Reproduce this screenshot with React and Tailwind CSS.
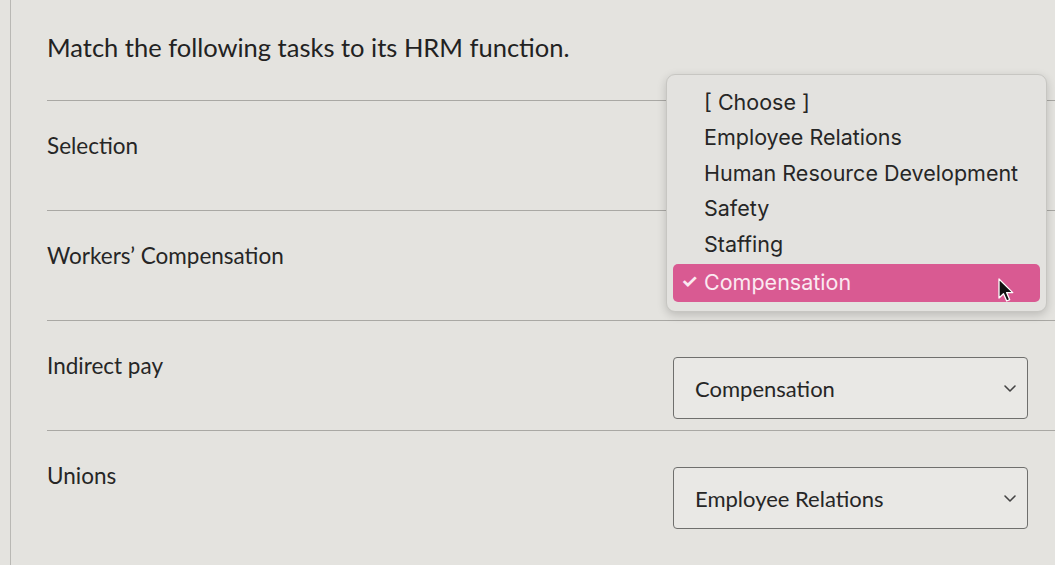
import React from 'react';

const rows = [
  { label: 'Selection', value: '[ Choose ]', covered: true },
  { label: 'Workers’ Compensation', value: 'Compensation', covered: true },
  { label: 'Indirect pay', value: 'Compensation' },
  { label: 'Unions', value: 'Employee Relations' },
];

const options = [
  '[ Choose ]',
  'Employee Relations',
  'Human Resource Development',
  'Safety',
  'Staffing',
  'Compensation',
];

function Chevron() {
  return (
    <svg width="14" height="9" viewBox="0 0 14 9" fill="none">
      <path d="M2 2l5 5 5-5" stroke="#444" strokeWidth="1.6" strokeLinecap="round" strokeLinejoin="round" />
    </svg>
  );
}

function Select({ value, covered }) {
  return (
    <div className="w-[355px] h-[62px] border border-[#6f6f6d] rounded-[4px] bg-[#e9e8e5] flex items-center justify-between pl-[21px] pr-[10px] text-[22px] text-[#262626]">
      {/* the open menu sits on top of these two, so their text is not drawn */}
      <span className={covered ? 'invisible' : ''}>{value}</span>
      <Chevron />
    </div>
  );
}

export default function App() {
  return (
    <div className="relative w-[1055px] h-[565px] overflow-hidden bg-[#e4e3df] font-['Lato','Liberation_Sans',sans-serif]">
      <div className="ml-[10px] h-full border-l border-[#b9b8b4] pl-[36px]">
        <h1 className="pt-[28px] h-[100px] text-[25.5px] text-[#222]">
          Match the following tasks to its HRM function.
        </h1>
        {rows.map((r) => (
          <div key={r.label} className="h-[110px] border-t border-[#a9a8a4] flex justify-between items-start pr-[27px]">
            <div className="pt-[28px] text-[22.5px] text-[#262626]">{r.label}</div>
            <div className="mt-[36px]">
              <Select value={r.value} covered={r.covered} />
            </div>
          </div>
        ))}
      </div>

      {/* open dropdown over the first two rows */}
      <div className="absolute left-[666px] top-[74px] w-[381px] h-[238px] rounded-[9px] bg-[#e3e2df] border border-[#c7c6c2] shadow-[0_3px_10px_rgba(0,0,0,0.18)] px-[6px] pt-[9px] font-['Inter','Liberation_Sans',sans-serif] text-[21.5px] text-[#262626]">
        {options.map((o) =>
          o === 'Compensation' ? (
            <div key={o} className="relative h-[38px] mt-[2px] rounded-[5px] bg-[#d95a92] text-[#fbe9f1] flex items-center pl-[8px]">
              <span className="w-[23px] text-[19px] font-bold">✓</span>
              <span>{o}</span>
              <svg className="absolute left-[324px] top-[14px]" width="18" height="26" viewBox="0 0 18 26">
                <path d="M2 1v19l4.5-4.3 3.2 7.3 3-1.3-3.1-7.1h6.2z" fill="#111" stroke="#fff" strokeWidth="1.3" strokeLinejoin="round" />
              </svg>
            </div>
          ) : (
            <div key={o} className="h-[35.5px] flex items-center pl-[31px]">{o}</div>
          )
        )}
      </div>
    </div>
  );
}
